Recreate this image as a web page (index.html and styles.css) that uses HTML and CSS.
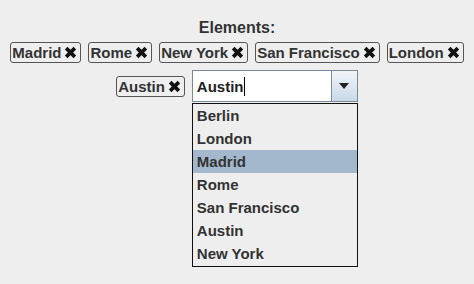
FILE: index.html
```html
<!DOCTYPE html>
<html lang="en">
<head>
    <meta charset="UTF-8">
    <title>Elements</title>
    <link rel="stylesheet" href="styles.css">
</head>
<body>
    <div class="panel">
        <div class="title">Elements:</div>

        <div class="tags">
            <span class="tag">Madrid<svg class="close" viewBox="0 0 12 12"><path d="M2 2L10 10M10 2L2 10"/></svg></span>
            <span class="tag">Rome<svg class="close" viewBox="0 0 12 12"><path d="M2 2L10 10M10 2L2 10"/></svg></span>
            <span class="tag">New York<svg class="close" viewBox="0 0 12 12"><path d="M2 2L10 10M10 2L2 10"/></svg></span>
            <span class="tag">San Francisco<svg class="close" viewBox="0 0 12 12"><path d="M2 2L10 10M10 2L2 10"/></svg></span>
            <span class="tag">London<svg class="close" viewBox="0 0 12 12"><path d="M2 2L10 10M10 2L2 10"/></svg></span>
            <span class="tag">Austin<svg class="close" viewBox="0 0 12 12"><path d="M2 2L10 10M10 2L2 10"/></svg></span>

            <!-- Editable combo with its popup open -->
            <div class="combo">
                <div class="combo-field">Austin<span class="caret"></span></div>
                <div class="combo-button">
                    <svg viewBox="0 0 12 8"><path d="M1 1H11L6 7Z"/></svg>
                </div>
                <div class="popup">
                    <div class="option">Berlin</div>
                    <div class="option">London</div>
                    <div class="option selected">Madrid</div>
                    <div class="option">Rome</div>
                    <div class="option">San Francisco</div>
                    <div class="option">Austin</div>
                    <div class="option">New York</div>
                </div>
            </div>
        </div>
    </div>
</body>
</html>
```

FILE: styles.css
```css
* {
    margin: 0;
    padding: 0;
    box-sizing: border-box;
}

html, body {
    height: 100%;
}

body {
    background-color: #eeeeee;
    color: #333333;
    font-family: 'Liberation Sans', Arial, sans-serif;
    font-weight: bold;
    font-size: 15px;
}

.panel {
    padding-top: 18px;
    display: flex;
    flex-direction: column;
    align-items: center;
}

.title {
    font-size: 16px;
    line-height: 20px;
    margin-bottom: 4px;
}

.tags {
    width: 474px;
    display: flex;
    flex-wrap: wrap;
    justify-content: center;
    align-items: flex-start;
    gap: 7px 7px;
}

.tag {
    display: flex;
    align-items: center;
    height: 21px;
    padding: 0 3px 0 1px;
    border: 1px solid #555555;
    border-radius: 3px;
    line-height: 19px;
    color: #333333;
}

.tags .tag:nth-child(6) {
    margin-top: 6px;
}

.close {
    width: 13px;
    height: 13px;
    margin-left: 3px;
}

.close path {
    stroke: #111111;
    stroke-width: 3.4;
    fill: none;
}

.combo {
    position: relative;
    z-index: 5;
    display: flex;
    width: 166px;
    height: 32px;
}

.combo-field {
    flex: 1;
    display: flex;
    align-items: center;
    padding-left: 4px;
    background-color: #ffffff;
    border: 1px solid #7a8a99;
    border-right: none;
    color: #222222;
}

.caret {
    width: 1px;
    height: 19px;
    background-color: #000000;
}

.combo-button {
    width: 27px;
    display: flex;
    align-items: center;
    justify-content: center;
    border: 1px solid #7a8a99;
    background: linear-gradient(#f2f6fa, #c8d8e8);
}

.combo-button svg {
    width: 12px;
    height: 8px;
}

.combo-button path {
    fill: #222222;
}

.popup {
    position: absolute;
    z-index: 10;
    top: 33px;
    left: 0;
    width: 166px;
    height: 164px;
    background-color: #eeeeee;
    border: 1px solid #111111;
}

.option {
    height: 23px;
    line-height: 23px;
    padding-left: 4px;
}

.option.selected {
    background-color: #a3b8cc;
}
```
